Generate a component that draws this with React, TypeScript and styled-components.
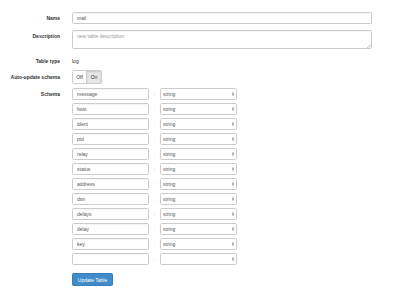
import React from 'react';
import styled, { createGlobalStyle } from 'styled-components';

const GlobalStyle = createGlobalStyle`
  html, body {
    margin: 0;
    padding: 0;
    background: #fff;
  }
  body {
    font-family: "Liberation Sans", Arial, sans-serif;
    font-size: 5px;
    color: #333;
  }
`;

const Form = styled.form`
  display: flex;
  flex-direction: column;
  padding: 12px 0 0 0;
  width: 400px;
`;

const Group = styled.div<{ $mb?: number; $align?: string }>`
  display: grid;
  grid-template-columns: 60px 1fr;
  column-gap: 12px;
  align-items: ${({ $align }) => $align || 'center'};
  margin-bottom: ${({ $mb }) => ($mb === undefined ? 6 : $mb)}px;
  padding-right: 28px;
`;

const Label = styled.label<{ $pt?: number }>`
  font-weight: bold;
  text-align: right;
  white-space: nowrap;
  color: #333;
  padding-top: ${({ $pt }) => $pt || 0}px;
`;

const Input = styled.input<{ $w?: number }>`
  box-sizing: border-box;
  height: 12px;
  width: ${({ $w }) => ($w ? `${$w}px` : '100%')};
  padding: 0 4px;
  border: 1px solid #ccc;
  border-radius: 1.5px;
  box-shadow: inset 0 0.5px 0.5px rgba(0, 0, 0, 0.075);
  font: inherit;
  color: #555;
  outline: none;
  &::placeholder {
    color: #999;
  }
`;

const AreaWrap = styled.div`
  position: relative;
  height: 19px;
`;

const TextArea = styled.textarea`
  box-sizing: border-box;
  display: block;
  width: 100%;
  height: 19px;
  padding: 2px 4px;
  border: 1px solid #ccc;
  border-radius: 1.5px;
  box-shadow: inset 0 0.5px 0.5px rgba(0, 0, 0, 0.075);
  font: inherit;
  line-height: 7px;
  color: #555;
  resize: none;
  outline: none;
  &::placeholder {
    color: #999;
  }
`;

const Grip = styled.svg`
  position: absolute;
  right: 1px;
  bottom: 1px;
`;

const StaticText = styled.div`
  color: #333;
  line-height: 12px;
`;

const Toggle = styled.div`
  display: flex;
  height: 14px;
`;

const ToggleBtn = styled.button<{ $active?: boolean; $first?: boolean }>`
  box-sizing: border-box;
  height: 14px;
  width: ${({ $first }) => ($first ? 15 : 16)}px;
  padding: 0;
  margin: 0;
  font: inherit;
  color: #333;
  border: 1px solid #ccc;
  margin-left: ${({ $first }) => ($first ? 0 : -1)}px;
  border-radius: ${({ $first }) => ($first ? '1.5px 0 0 1.5px' : '0 1.5px 1.5px 0')};
  background: ${({ $active }) => ($active ? '#e6e6e6' : '#fff')};
  box-shadow: ${({ $active }) => ($active ? 'inset 0 1px 2px rgba(0,0,0,0.125)' : 'none')};
`;

const SchemaList = styled.div`
  display: flex;
  flex-direction: column;
  gap: 3px;
`;

const SchemaRow = styled.div`
  display: flex;
  align-items: center;
`;

const Colon = styled.span`
  width: 11px;
  text-align: center;
  color: #999;
`;

const SelectWrap = styled.div`
  position: relative;
  width: 77px;
  height: 12px;
`;

const Select = styled.select`
  box-sizing: border-box;
  appearance: none;
  width: 100%;
  height: 12px;
  padding: 0 0 0 2px;
  border: 1px solid #ccc;
  border-radius: 1.5px;
  background: #fff;
  font: inherit;
  color: #555;
  outline: none;
`;

const Arrows = styled.svg`
  position: absolute;
  right: 3px;
  top: 4px;
  pointer-events: none;
`;

const Submit = styled.button`
  box-sizing: border-box;
  height: 13px;
  width: 41px;
  padding: 0;
  font: inherit;
  color: #fff;
  background: #428bca;
  border: 1px solid #357ebd;
  border-radius: 1.5px;
`;

const fields = [
  'message',
  'host',
  'ident',
  'pid',
  'relay',
  'status',
  'address',
  'dsn',
  'delays',
  'delay',
  'key',
  '',
];

const App: React.FC = () => (
  <>
    <GlobalStyle />
    <Form onSubmit={(e) => e.preventDefault()}>
      <Group>
        <Label>Name</Label>
        <Input defaultValue="mail" />
      </Group>
      <Group $align="start">
        <Label $pt={3}>Description</Label>
        <AreaWrap>
          <TextArea placeholder="new table description" />
          <Grip width="4" height="4" viewBox="0 0 4 4">
            <path d="M4 0L0 4M4 2L2 4" stroke="#999" strokeWidth="0.5" />
          </Grip>
        </AreaWrap>
      </Group>
      <Group $mb={3}>
        <Label>Table type</Label>
        <StaticText>log</StaticText>
      </Group>
      <Group $mb={4}>
        <Label>Auto-update schema</Label>
        <Toggle>
          <ToggleBtn type="button" $first>
            Off
          </ToggleBtn>
          <ToggleBtn type="button" $active>
            On
          </ToggleBtn>
        </Toggle>
      </Group>
      <Group $align="start" $mb={8}>
        <Label $pt={3}>Schema</Label>
        <SchemaList>
          {fields.map((f, i) => (
            <SchemaRow key={i}>
              <Input $w={77} defaultValue={f} />
              <Colon>:</Colon>
              <SelectWrap>
                <Select defaultValue={f ? 'string' : ''}>
                  {!f && <option value="" />}
                  <option value="string">string</option>
                </Select>
                <Arrows width="2" height="4" viewBox="0 0 2 4">
                  <path d="M0 1.5L1 0.3L2 1.5ZM0 2.5L1 3.7L2 2.5Z" fill="#444" />
                </Arrows>
              </SelectWrap>
            </SchemaRow>
          ))}
        </SchemaList>
      </Group>
      <Group>
        <span />
        <div>
          <Submit type="submit">Update Table</Submit>
        </div>
      </Group>
    </Form>
  </>
);

export default App;
